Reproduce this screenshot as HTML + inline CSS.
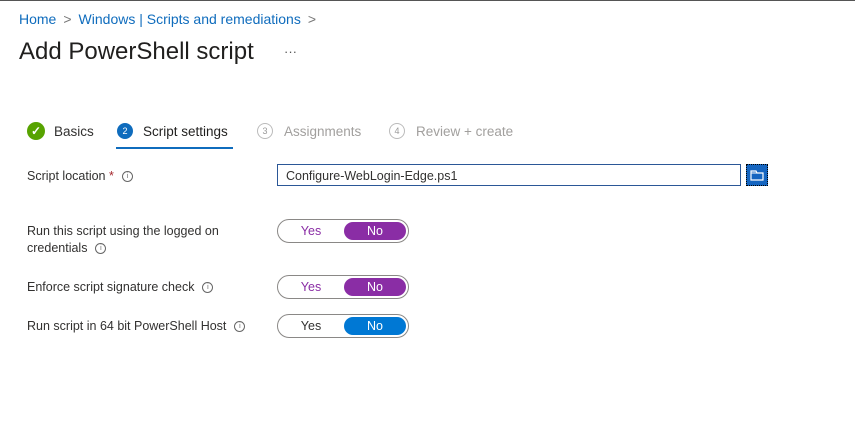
<!DOCTYPE html>
<html><head><style>
*{margin:0;padding:0;box-sizing:border-box}
body{width:855px;height:447px;background:#fff;font-family:"Liberation Sans",sans-serif;position:relative;overflow:hidden;color:#323130}
.a{position:absolute;white-space:nowrap}
.bc{font-size:14px;color:#0f6cbd;top:11px;left:19px}
.bc span{color:#777;margin:0 7px}
.t{font-size:24px;top:38px;left:19px;color:#201f1e;font-weight:500}
.tab{font-size:13.5px;top:124px}
.circ{position:absolute;width:16px;height:16px;border-radius:50%;font-size:9px;text-align:center;line-height:14px}
.lbl{font-size:12.5px;color:#323130}
.i{display:inline-block;width:11px;height:11px;border:1px solid #666;border-radius:50%;font-size:7px;text-align:center;line-height:9px;color:#666;vertical-align:middle;margin-left:8px}
.tg{position:absolute;left:277px;width:132px;height:24px;border:1px solid #8a8886;border-radius:12px;font-size:12.5px}
.tg .y{position:absolute;left:0;width:66px;top:4px;text-align:center}
.tg .n{position:absolute;left:66px;top:2px;width:62px;height:18px;border-radius:9px;color:#fff;text-align:center;line-height:18px}
</style></head><body>
<div style="position:absolute;top:0;left:0;width:855px;height:1px;background:#555"></div>
<div class="a bc">Home<span>&gt;</span>Windows | Scripts and remediations<span>&gt;</span></div>
<div class="a t">Add PowerShell script</div>
<div class="a" style="left:284px;top:44px;font-size:13px;color:#555">···</div>

<div class="circ" style="left:27px;top:122px;width:18px;height:18px;background:#57a300;color:#fff;line-height:18px;font-size:12px;font-weight:bold">✓</div>
<div class="a tab" style="left:54px">Basics</div>
<div class="circ" style="left:117px;top:123px;background:#0f6cbd;color:#fff;border:1px solid #0f6cbd">2</div>
<div class="a tab" style="left:143px;color:#201f1e;font-weight:500">Script settings</div>
<div style="position:absolute;left:116px;top:147px;width:117px;height:2px;background:#0f6cbd"></div>
<div class="circ" style="left:257px;top:123px;border:1px solid #bbb;color:#999">3</div>
<div class="a tab" style="left:284px;color:#a19f9d">Assignments</div>
<div class="circ" style="left:389px;top:123px;border:1px solid #bbb;color:#999">4</div>
<div class="a tab" style="left:416px;color:#a19f9d">Review + create</div>

<div class="a lbl" style="left:27px;top:169px">Script location <span style="color:#a4262c">*</span><span class="i">i</span></div>
<div style="position:absolute;left:277px;top:164px;width:464px;height:22px;border:1px solid #2b5797;font-size:12.5px;padding:4px 8px;color:#323130">Configure-WebLogin-Edge.ps1</div>
<div style="position:absolute;left:746px;top:164px;width:22px;height:22px;background:#1565c0;border:1px dotted #000">
<svg width="20" height="20" viewBox="0 0 20 20"><path d="M4 6h5l1 2h6v7H4z" fill="none" stroke="#fff" stroke-width="1.2"/><path d="M4 8h12" stroke="#fff" stroke-width="1"/></svg></div>

<div class="a lbl" style="left:27px;top:223px;line-height:17px">Run this script using the logged on<br>credentials<span class="i">i</span></div>
<div class="tg" style="top:219px"><div class="y" style="color:#8a2da5">Yes</div><div class="n" style="background:#8a2da5">No</div></div>
<div class="a lbl" style="left:27px;top:280px">Enforce script signature check<span class="i">i</span></div>
<div class="tg" style="top:275px"><div class="y" style="color:#8a2da5">Yes</div><div class="n" style="background:#8a2da5">No</div></div>
<div class="a lbl" style="left:27px;top:319px">Run script in 64 bit PowerShell Host<span class="i">i</span></div>
<div class="tg" style="top:314px"><div class="y">Yes</div><div class="n" style="background:#0078d4">No</div></div>
</body></html>
